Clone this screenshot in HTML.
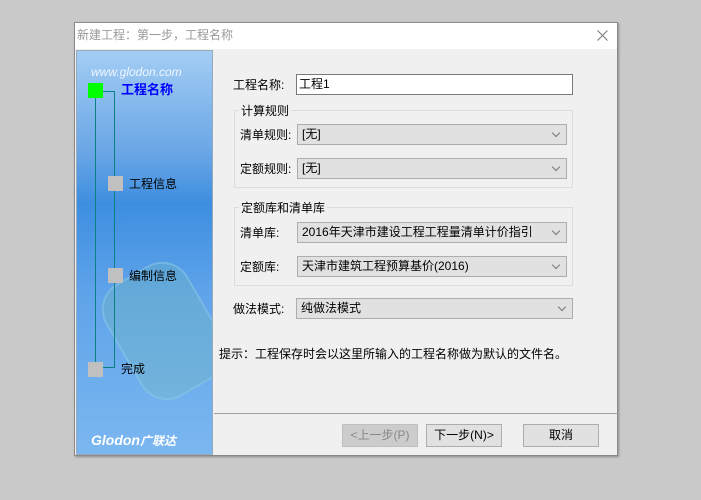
<!DOCTYPE html><html><head><meta charset="utf-8"><style>
*{margin:0;padding:0;box-sizing:border-box}
body{width:701px;height:500px;background:#c9c9c9;position:relative;overflow:hidden;font-family:"Liberation Sans","Noto Sans CJK SC",sans-serif;font-size:12px;line-height:14px;color:#000}
.a{position:absolute}
.dlg{left:74px;top:22px;width:544px;height:434px;background:#f0f0f0;border:1px solid #8a8a8a;box-shadow:1px 1px 2px rgba(0,0,0,.3)}
.title{left:0;top:0;width:542px;height:26px;background:#fff;color:#999;font-size:12px;line-height:24px;padding-left:2px}
.left{left:1px;top:27px;width:137px;height:405px;overflow:hidden;background:linear-gradient(#a3cdf4 0%,#6aa6e6 25%,#3d8ee0 38%,#5fa3ea 60%,#7bb7f0 100%);border:1px solid #9ab}
.sq{width:15px;height:15px;background:#c0c0c0}
.ln{background:#0b8080}
.cb{background:#e1e1e1;border:1px solid #adadad;height:21px;line-height:19px;padding-left:4px}
.cb:after{content:"";position:absolute;right:7px;top:5px;width:5px;height:5px;border-right:1px solid #777;border-bottom:1px solid #777;transform:rotate(45deg)}
.grp{border:1px solid #dcdcdc}
.gl{background:#f0f0f0;padding:0 2px}
.btn{height:23px;border:1px solid #adadad;background:#e1e1e1;text-align:center;line-height:21px}
</style></head><body>
<div class="a dlg">
<div class="a title">新建工程：第一步，工程名称
<svg class="a" style="right:9px;top:7px" width="11" height="11"><path d="M0.5 0.5L10.5 10.5M10.5 0.5L0.5 10.5" stroke="#777" stroke-width="1"/></svg></div>
<div class="a left">
<div class="a" style="left:40px;top:215px;width:95px;height:130px;border:2px solid rgba(140,200,240,.5);border-radius:30px;transform:rotate(-30deg);background:rgba(120,190,170,.25)"></div>
<div class="a" style="left:14px;top:14px;color:#eef6ff;font-style:italic;font-size:12px">www.glodon.com</div>
<div class="a ln" style="left:18px;top:40px;width:1px;height:280px"></div>
<div class="a ln" style="left:37px;top:40px;width:1px;height:277px"></div>
<div class="a ln" style="left:25px;top:40px;width:13px;height:1px"></div>
<div class="a ln" style="left:25px;top:316px;width:13px;height:1px"></div>
<div class="a sq" style="left:11px;top:32px;background:#00ff00"></div>
<div class="a" style="left:44px;top:32px;color:#0000ff;font-weight:bold;font-size:13px">工程名称</div>
<div class="a sq" style="left:31px;top:125px"></div>
<div class="a" style="left:52px;top:126px">工程信息</div>
<div class="a sq" style="left:31px;top:217px"></div>
<div class="a" style="left:52px;top:218px">编制信息</div>
<div class="a sq" style="left:11px;top:311px"></div>
<div class="a" style="left:44px;top:311px">完成</div>
<div class="a" style="left:14px;top:382px;color:#fff;font-weight:bold;font-style:italic;font-size:14px">Glodon<span style="font-size:12px">广联达</span></div>
</div>
<div class="a" style="left:158px;top:55px">工程名称:</div>
<div class="a" style="left:221px;top:51px;width:277px;height:21px;background:#fff;border:1px solid #7a7a7a;line-height:19px;padding-left:2px">工程1</div>
<div class="a grp" style="left:159px;top:87px;width:339px;height:78px"></div>
<div class="a gl" style="left:164px;top:81px">计算规则</div>
<div class="a" style="left:165px;top:105px">清单规则:</div>
<div class="a cb" style="left:222px;top:101px;width:270px">[无]</div>
<div class="a" style="left:165px;top:139px">定额规则:</div>
<div class="a cb" style="left:222px;top:135px;width:270px">[无]</div>
<div class="a grp" style="left:159px;top:184px;width:339px;height:79px"></div>
<div class="a gl" style="left:164px;top:178px">定额库和清单库</div>
<div class="a" style="left:165px;top:203px">清单库:</div>
<div class="a cb" style="left:222px;top:199px;width:270px">2016年天津市建设工程工程量清单计价指引</div>
<div class="a" style="left:165px;top:237px">定额库:</div>
<div class="a cb" style="left:222px;top:233px;width:270px">天津市建筑工程预算基价(2016)</div>
<div class="a" style="left:158px;top:279px">做法模式:</div>
<div class="a cb" style="left:221px;top:275px;width:277px">纯做法模式</div>
<div class="a" style="left:144px;top:324px">提示：工程保存时会以这里所输入的工程名称做为默认的文件名。</div>
<div class="a" style="left:139px;top:390px;width:404px;height:1px;background:#a0a0a0"></div>
<div class="a btn" style="left:267px;top:401px;width:76px;color:#888;background:#ccc;border-color:#bfbfbf">&lt;上一步(P)</div>
<div class="a btn" style="left:351px;top:401px;width:76px">下一步(N)&gt;</div>
<div class="a btn" style="left:448px;top:401px;width:76px">取消</div>
</div>
</body></html>
